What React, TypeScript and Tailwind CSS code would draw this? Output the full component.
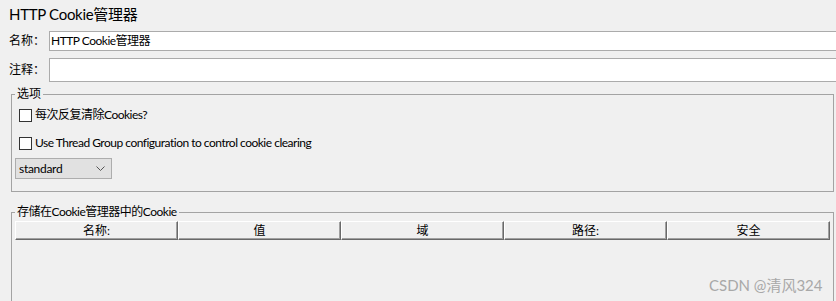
import React from "react";

const headers = ["名称:", "值", "域", "路径:", "安全"];

function Checkbox({ label }: { label: string }) {
  return (
    <label className="flex items-center gap-[3px] h-[28px] pl-[4px]">
      <span className="w-[13px] h-[13px] border border-[#333333] bg-white shrink-0" />
      <span className="text-[12px] tracking-[-0.5px] text-black whitespace-nowrap">{label}</span>
    </label>
  );
}

export default function App() {
  return (
    <div
      className="relative w-[836px] h-[301px] overflow-hidden bg-[#f0f0f0] text-black"
      style={{ fontFamily: 'Lato, "Noto Sans CJK SC", sans-serif' }}
    >
      {/* Title */}
      <div className="h-[31px] pt-[4px] pl-[9px] text-[15px] tracking-[-0.3px] leading-[20px] whitespace-nowrap">
        HTTP Cookie管理器
      </div>

      {/* Name */}
      <div className="flex items-center h-[20px]">
        <span className="w-[49px] shrink-0 whitespace-nowrap pl-[9px] text-[12px]">名称：</span>
        <div className="w-[800px] h-[20px] border border-[#ababab] bg-white flex items-center pl-[1px] text-[12px] tracking-[-0.5px] shrink-0 whitespace-nowrap">
          HTTP Cookie管理器
        </div>
      </div>

      {/* Comment */}
      <div className="flex items-center h-[24px] mt-[7px]">
        <span className="w-[49px] shrink-0 whitespace-nowrap pl-[9px] text-[12px]">注释：</span>
        <div className="w-[800px] h-[24px] border border-[#ababab] bg-white shrink-0" />
      </div>

      {/* Options */}
      <fieldset className="mt-[5px] ml-[11px] w-[823px] border border-[#a3a3a3] pl-[3px] pb-[12px]">
        <legend className="px-[2px] text-[12px] leading-[14px]">选项</legend>
        <Checkbox label="每次反复清除Cookies?" />
        <Checkbox label="Use Thread Group configuration to control cookie clearing" />
        <div className="mt-[1px] w-[97px] h-[21px] border border-[#adadad] bg-[#e1e1e1] flex items-center justify-between pl-[3px] pr-[6px] text-[12px] tracking-[-0.3px]">
          <span>standard</span>
          <svg width="9" height="6" viewBox="0 0 9 6">
            <polyline points="0.5,0.5 4.5,4.5 8.5,0.5" fill="none" stroke="#555" strokeWidth="1" />
          </svg>
        </div>
      </fieldset>

      {/* Stored cookies */}
      <fieldset className="mt-[13px] ml-[11px] w-[823px] h-[140px] border border-[#a3a3a3] pl-[3px]">
        <legend className="px-[2px] text-[12px] tracking-[-0.5px] leading-[14px]">存储在Cookie管理器中的Cookie</legend>
        <div className="mt-[2px] flex w-[815px]">
          {headers.map((h) => (
            <div
              key={h}
              className="flex-1 h-[19px] flex items-center justify-center text-[12px] bg-[#f0f0f0] border-t border-l border-white border-r border-b border-r-[#696969] border-b-[#696969] shadow-[inset_-1px_-1px_0_#a0a0a0]"
            >
              {h}
            </div>
          ))}
        </div>
      </fieldset>

      {/* Watermark */}
      <div className="absolute left-[709px] top-[274px] text-[15px] text-[#a8a8a8] whitespace-nowrap">CSDN @清风324</div>
    </div>
  );
}
